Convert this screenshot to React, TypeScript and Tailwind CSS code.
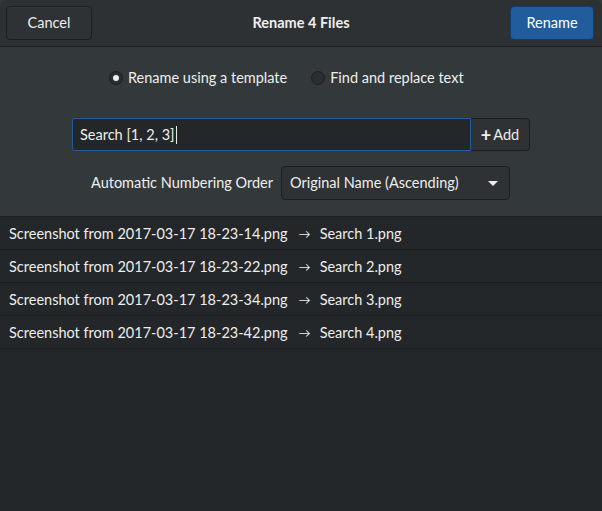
const files = [
  ["Screenshot from 2017-03-17 18-23-14.png", "Search 1.png"],
  ["Screenshot from 2017-03-17 18-23-22.png", "Search 2.png"],
  ["Screenshot from 2017-03-17 18-23-34.png", "Search 3.png"],
  ["Screenshot from 2017-03-17 18-23-42.png", "Search 4.png"],
];

function Radio({ checked, label }: { checked?: boolean; label: string }) {
  return (
    <label className="flex items-center gap-[5px]">
      <span className="flex h-[14px] w-[14px] items-center justify-center rounded-full border border-[#1b1f20] bg-[#2a2e30]">
        {checked && <span className="h-[6px] w-[6px] rounded-full bg-[#eeeeec]" />}
      </span>
      <span>{label}</span>
    </label>
  );
}

export default function App() {
  return (
    <div
      className="flex h-[511px] w-[602px] flex-col bg-[#33393b] text-[14.5px] text-[#eeeeec]"
      style={{ fontFamily: "Lato, 'Noto Sans', sans-serif" }}
    >
      {/* header bar */}
      <div className="flex h-[47px] shrink-0 items-center justify-between rounded-t-[6px] border-b border-[#1c1f20] bg-[#2d3133] pl-[6px] pr-[8px]">
        <button className="h-[34px] w-[86px] rounded-[4px] border border-[#1b1f20] bg-[#2e3234] shadow-[inset_0_1px_rgba(255,255,255,0.03)]">
          Cancel
        </button>
        <div className="font-bold">Rename 4 Files</div>
        <button className="h-[34px] w-[84px] rounded-[4px] border border-[#0f3b71] bg-[#215d9c] text-white">
          Rename
        </button>
      </div>

      {/* options */}
      <div className="flex flex-col pt-[21px]">
        <div className="flex h-[20px] gap-[24px] pl-[109px]">
          <Radio checked label="Rename using a template" />
          <Radio label="Find and replace text" />
        </div>

        <div className="mt-[30px] flex pl-[72px]">
          <div className="flex h-[33px] w-[399px] items-center rounded-l-[3px] border border-[#215d9c] bg-[#232729] px-[7px]">
            Search [1, 2, 3]
            <span className="ml-[1px] h-[18px] w-px bg-[#eeeeec]" />
          </div>
          <button className="flex h-[33px] w-[59px] items-center justify-center gap-[2px] rounded-r-[4px] border border-l-0 border-[#1b1f20] bg-[#2e3234]">
            <span className="text-[18px] font-bold leading-none">+</span>Add
          </button>
        </div>

        <div className="mt-[15px] flex items-center pl-[91px]">
          <span className="w-[190px]">Automatic Numbering Order</span>
          <button className="flex h-[34px] w-[229px] items-center justify-between rounded-[4px] border border-[#1b1f20] bg-[#2e3234] pl-[8px] pr-[10px]">
            Original Name (Ascending)
            <svg width="12" height="6" viewBox="0 0 12 6" className="mt-[1px]">
              <path d="M1 0h10L6 5z" fill="#eeeeec" />
            </svg>
          </button>
        </div>
      </div>

      {/* list */}
      <div className="mt-[16px] flex-1 border-t border-[#1c1f20] bg-[#232729]">
        {files.map(([from, to]) => (
          <div
            key={from}
            className="flex h-[33px] items-center border-b border-[#1b1e1f] pl-[9px] pt-[2px]"
          >
            <span>{from}</span>
            <span className="ml-[11px] text-[12px]">→</span>
            <span className="ml-[9px]">{to}</span>
          </div>
        ))}
      </div>
    </div>
  );
}
